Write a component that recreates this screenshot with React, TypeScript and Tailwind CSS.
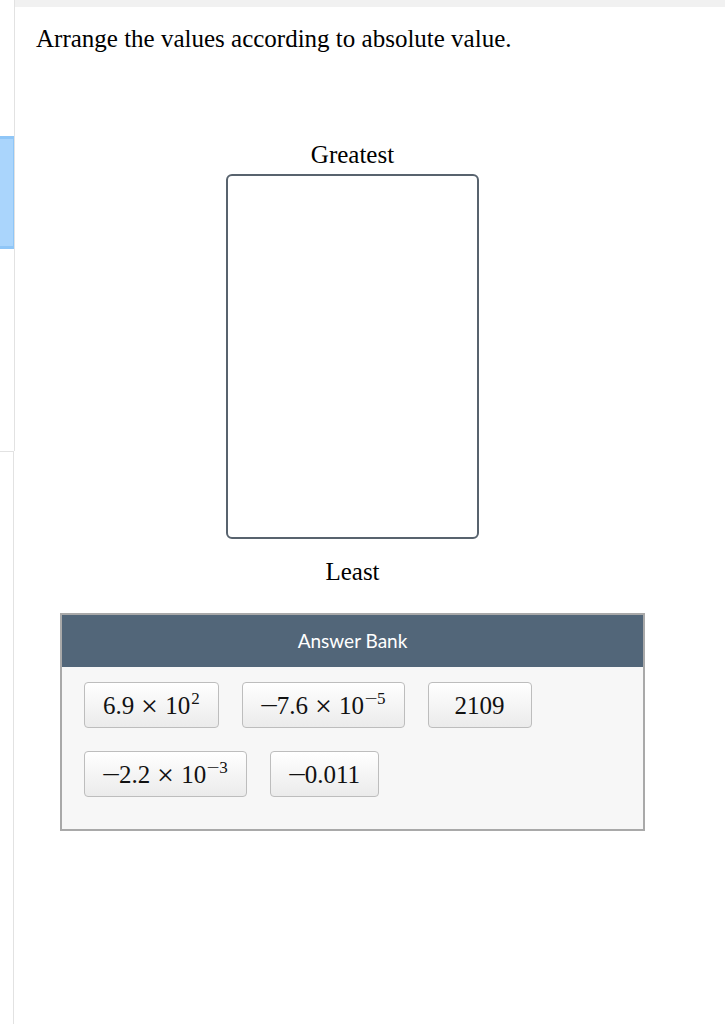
type Tile = { neg?: boolean; mant: string; exp?: string; expNeg?: boolean };

const rows: Tile[][] = [
  [
    { mant: "6.9", exp: "2" },
    { neg: true, mant: "7.6", exp: "5", expNeg: true },
    { mant: "2109" },
  ],
  [
    { neg: true, mant: "2.2", exp: "3", expNeg: true },
    { neg: true, mant: "0.011" },
  ],
];

// math-style operators are wider than the text-font glyphs, so stretch them
function Minus({ small }: { small?: boolean }) {
  return (
    <span
      className={
        small
          ? "inline-block w-[12px] scale-x-[1.35] text-center"
          : "inline-block w-[16px] scale-x-[1.35] text-center"
      }
    >
      −
    </span>
  );
}

function ValueTile({ neg, mant, exp, expNeg }: Tile) {
  return (
    <div className="flex h-[46px] min-w-[104px] items-center justify-center rounded-[4px] border border-[#bdbdbd] bg-gradient-to-b from-white to-[#ebebeb] pl-[18px] pr-[18px] text-[25px] leading-none text-[#111]">
      <span className="whitespace-nowrap">
        {neg && <Minus />}
        {mant}
        {exp && (
          <>
            <span className="mx-[8px] inline-block w-[15px] scale-[1.2] text-center">×</span>
            10
            <sup className="relative -top-[10px] ml-[1px] text-[17px]">
              {expNeg && <Minus small />}
              {exp}
            </sup>
          </>
        )}
      </span>
    </div>
  );
}

export default function App() {
  return (
    <div className="flex min-h-[1024px] bg-white font-['Liberation_Serif',serif] text-black">
      <aside className="flex w-[15px] shrink-0 flex-col">
        <div className="h-[451px] border-r border-[#e2e2e2] pt-[136px]">
          <div className="h-[113px] border-y-[3px] border-r border-[#8fc6f7] bg-[#aad5fc]" />
        </div>
        <div className="w-[14px] flex-1 border-t border-r border-[#e2e2e2]" />
      </aside>

      <main className="flex-1">
        <div className="h-[7px] bg-[#f1f1f1]" />

        <div className="w-[654px] pl-[21px]">
          <h1 className="mt-[17px] text-[25px] leading-[30px]">
            Arrange the values according to absolute value.
          </h1>

          <div className="mt-[86px] flex flex-col items-center">
            <div className="text-[25px] leading-[30px]">Greatest</div>
            <div className="mt-[4px] h-[365px] w-[253px] rounded-[6px] border-2 border-[#58636e]" />
            <div className="mt-[18px] text-[25px] leading-[30px]">Least</div>
          </div>

          <section className="mx-[24px] mt-[26px] border-2 border-[#a9a9a9]">
            <div className="flex h-[52px] items-center justify-center bg-[#526679] font-['Lato',sans-serif] text-[19px] text-white">
              Answer Bank
            </div>
            <div className="flex flex-col gap-[23px] bg-[#f7f7f7] pt-[15px] pb-[32px] pl-[22px]">
              {rows.map((row, i) => (
                <div key={i} className="flex gap-[23px]">
                  {row.map((t, j) => (
                    <ValueTile key={j} {...t} />
                  ))}
                </div>
              ))}
            </div>
          </section>
        </div>
      </main>
    </div>
  );
}
